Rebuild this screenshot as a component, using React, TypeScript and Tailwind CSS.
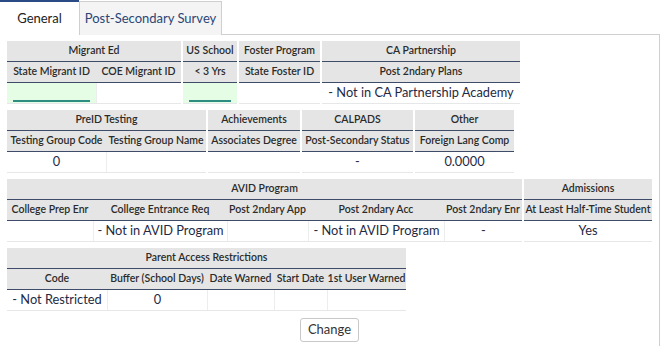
import React from "react";

type Col = { label: string; w: number; value?: string; green?: boolean };
type Group = { title: string; cols: Col[] };

const font = { fontFamily: "Lato, 'Open Sans', sans-serif" };

function Block({ g }: { g: Group }) {
  const total = g.cols.reduce((a, c) => a + c.w, 0);
  return (
    <div className="flex flex-col" style={{ width: total }}>
      <div className="h-[21px] bg-[#e4e5e4] border-b border-[#3e4c69] flex items-center justify-center text-[10.5px] font-semibold text-[#2b2b2b]">
        {g.title}
      </div>
      <div className="h-[21px] bg-[#e4e5e4] border-b border-[#3e4c69] flex">
        {g.cols.map((c, i) => (
          <div key={i} style={{ width: c.w }} className="flex items-center justify-center text-[10.5px] font-semibold text-[#2b2b2b] whitespace-nowrap">
            {c.label}
          </div>
        ))}
      </div>
      <div className="h-[21px] flex border-b border-[#e6e7e8]">
        {g.cols.map((c, i) => (
          <div
            key={i}
            style={{ width: c.w }}
            className={`relative flex items-center justify-center text-[12.8px] text-[#1f2a44] whitespace-nowrap ${i > 0 ? "border-l border-[#eceded]" : ""} ${c.green ? "bg-[#e5fde5]" : "bg-white"}`}
          >
            {c.value}
            {c.green && <div className="absolute left-[6px] right-[6px] bottom-[1px] h-[2px] bg-[#2e8d82]" />}
          </div>
        ))}
      </div>
    </div>
  );
}

function Row({ groups }: { groups: Group[] }) {
  return (
    <div className="flex gap-[2px]">
      {groups.map((g, i) => (
        <Block key={i} g={g} />
      ))}
    </div>
  );
}

export default function App() {
  const row1: Group[] = [
    { title: "Migrant Ed", cols: [{ label: "State Migrant ID", w: 89, green: true }, { label: "COE Migrant ID", w: 85 }] },
    { title: "US School", cols: [{ label: "< 3 Yrs", w: 54, green: true }] },
    { title: "Foster Program", cols: [{ label: "State Foster ID", w: 81 }] },
    { title: "CA Partnership", cols: [{ label: "Post 2ndary Plans", w: 198, value: "- Not in CA Partnership Academy" }] },
  ];
  const row2: Group[] = [
    { title: "PreID Testing", cols: [{ label: "Testing Group Code", w: 99, value: "0" }, { label: "Testing Group Name", w: 100 }] },
    { title: "Achievements", cols: [{ label: "Associates Degree", w: 92 }] },
    { title: "CALPADS", cols: [{ label: "Post-Secondary Status", w: 111, value: "-" }] },
    { title: "Other", cols: [{ label: "Foreign Lang Comp", w: 99, value: "0.0000" }] },
  ];
  const row3: Group[] = [
    {
      title: "AVID Program",
      cols: [
        { label: "College Prep Enr", w: 86 },
        { label: "College Entrance Req", w: 134, value: "- Not in AVID Program" },
        { label: "Post 2ndary App", w: 81 },
        { label: "Post 2ndary Acc", w: 136, value: "- Not in AVID Program" },
        { label: "Post 2ndary Enr", w: 78, value: "-" },
      ],
    },
    { title: "Admissions", cols: [{ label: "At Least Half-Time Student", w: 128, value: "Yes" }] },
  ];
  const row4: Group[] = [
    {
      title: "Parent Access Restrictions",
      cols: [
        { label: "Code", w: 100, value: "- Not Restricted" },
        { label: "Buffer (School Days)", w: 100, value: "0" },
        { label: "Date Warned", w: 67 },
        { label: "Start Date", w: 53 },
        { label: "1st User Warned", w: 79 },
      ],
    },
  ];

  return (
    <div className="w-[661px] h-[346px] bg-white overflow-hidden" style={font}>
      <div className="flex h-[35px]">
        <div className="w-[79px] border-t-2 border-[#2a4a86] flex items-center justify-center text-[13px] text-[#222] pt-[1px]">
          General
        </div>
        <div className="w-[143px] mt-[1px] bg-[#f4f4f4] border border-[#cfcfcf] border-b-0 flex items-center justify-center text-[13px] text-[#2a4677]">
          Post-Secondary Survey
        </div>
        <div className="flex-1 border-b border-[#cfcfcf] mr-[1px]" />
      </div>
      <div className="border-r border-[#cfcfcf] mr-[1px] h-[311px] pl-[7px] pt-[6px] flex flex-col gap-[6px]">
        <Row groups={row1} />
        <Row groups={row2} />
        <Row groups={row3} />
        <Row groups={row4} />
        <div className="flex justify-center -ml-[7px] mt-[1px]">
          <button className="h-[24px] px-[7px] border border-[#c8c8c8] rounded-[3px] bg-white text-[13px] text-[#333]">
            Change
          </button>
        </div>
      </div>
    </div>
  );
}
